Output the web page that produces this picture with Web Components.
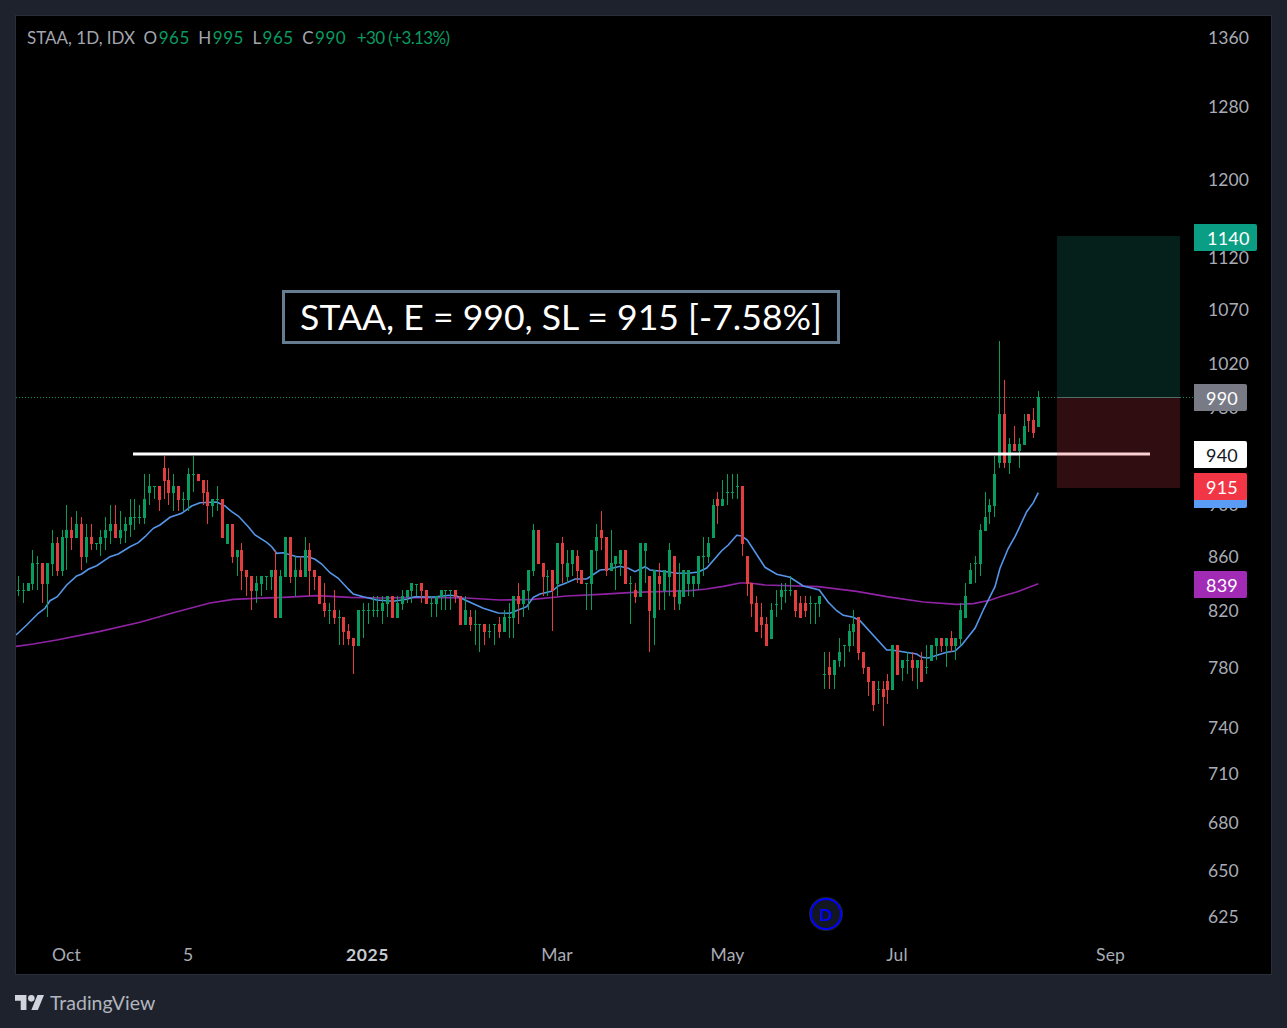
<!DOCTYPE html>
<html>
<head>
<meta charset="utf-8">
<title>STAA chart</title>
<style>
  html, body { margin: 0; background: #1e222d; }
</style>
</head>
<body>
<tv-page>
  <tv-chart-frame>
    <tv-candles></tv-candles>
    <tv-legend></tv-legend>
    <tv-chart-note>STAA, E = 990, SL = 915 [-7.58%]</tv-chart-note>
    <tv-price-axis ticks="1360:38,1280:107,1200:180,1120:258,1070:310,1020:364,980:408,900:505,860:557,820:611,780:668,740:728,710:774,680:823,650:871,625:917"></tv-price-axis>
    <tv-price-badge top="481" bottom="508" bg="#5b9cf6"></tv-price-badge>
    <tv-price-badge top="224" bottom="251" bg="#0a9f84" wide>1140</tv-price-badge>
    <tv-price-badge top="384" bottom="411" bg="#787b86">990</tv-price-badge>
    <tv-price-badge top="441" bottom="468" bg="#ffffff" fg="#131722">940</tv-price-badge>
    <tv-price-badge top="473" bottom="500" bg="#f23645">915</tv-price-badge>
    <tv-price-badge top="571" bottom="598" bg="#a22bb6">839</tv-price-badge>
    <tv-event-marker>D</tv-event-marker>
    <tv-time-axis ticks="Oct:66.5,5:188,2025:367.5:b,Mar:557,May:727.5,Jul:897,Sep:1110.5"></tv-time-axis>
  </tv-chart-frame>
  <tv-brand>TradingView</tv-brand>
</tv-page>

<script>
const FONT = `Lato, "Open Sans", sans-serif`;

// candle data read off the chart: colour, body top, body bottom, wick top, wick bottom
const ZONE_A = { off: 440, rows: `g 450 450 408 468|g 450 450 429 488|g 429 453 429 453|g 369 432 330 450|g 369 369 348 450|r 369 432 369 489|g 369 432 369 530|g 309 372 270 408|r 309 393 291 408|g 291 393 270 408|g 270 294 195 390|r 270 294 231 330|g 252 294 213 294|r 252 351 231 390|g 291 351 252 369|r 291 312 252 330|g 310 310 310 330|g 291 312 270 348|g 270 294 231 330|g 252 273 195 312|r 252 294 195 294|g 270 294 213 312|g 252 273 231 309|g 231 255 177 291|g 231 231 177 270|g 231 231 195 252|g 177 234 102 252|g 138 159 102 195|g 138 138 138 177|r 138 180 138 213|r 84 123 48 177|r 120 159 84 195|g 138 159 102 213|r 138 180 138 213|g 178 178 156 213|g 102 180 84 213|g 103 103 48 156|r 102 123 102 123|r 120 159 120 195|r 156 198 120 252|g 177 198 177 231|g 178 178 138 213|r 177 294 177 294|g 252 312 252 312|r 252 351 252 369|g 330 351 330 408|r 330 393 309 450|r 390 411 390 468|r 408 453 408 510|g 429 453 408 489|g 408 432 408 468|g 408 408 408 450|g 390 411 390 450|r 390 534 330 534|g 408 534 390 534|g 291 411 291 411|r 291 411 291 429|g 390 411 348 468|r 390 411 348 411|g 330 411 291 411|r 330 393 309 468|r 390 411 390 450|r 408 492 408 492|r 489 513 429 531|g 511 511 489 552|r 510 534 450 552|g 531 531 510 615|r 531 576 531 615|r 573 597 552 615` };
const ZONE_B = { off: 460, rows: `r 534 558 534 642|g 450 558 450 558|g 451 451 429 534|g 451 451 429 492|g 451 451 408 471|g 451 451 408 471|g 429 453 408 492|g 408 432 408 471|r 408 474 408 474|g 429 474 408 474|g 408 432 390 450|g 390 411 390 429|g 369 393 369 429|g 371 371 371 408|r 369 393 369 429|r 390 432 390 432|g 430 430 408 471|g 408 432 408 471|g 390 411 390 450|g 391 391 391 450|g 391 391 391 450|r 390 411 390 429|r 408 495 408 495|g 450 495 408 495|r 471 495 450 513|g 493 493 450 555|g 493 493 493 576|r 492 516 492 555|g 514 514 492 534|g 493 493 493 555|r 492 516 471 534|g 471 516 450 516|g 472 472 429 534|g 408 474 408 534|r 408 432 369 492|g 390 432 390 471|g 330 393 330 450|g 210 333 192 348|r 210 312 210 312|r 309 351 309 408|g 349 349 330 408|r 330 393 330 513|g 249 372 249 408|r 249 312 231 369|g 309 351 270 369|g 270 312 270 348|r 288 333 270 369|r 330 372 330 372|g 370 370 370 450|g 270 372 270 450|g 231 273 192 330|r 210 234 153 270|r 231 333 231 348|g 309 333 210 333|g 288 312 288 390|g 270 312 270 348|r 270 372 270 372|g 370 370 348 492|r 390 411 369 429|g 249 411 249 411|g 249 273 249 369|r 348 453 348 576|g 330 474 330 555|r 348 372 309 450|g 330 393 330 450|g 270 351 249 408|r 288 411 288 450|g 390 432 309 450|g 330 411 330 411|g 330 372 330 408|g 348 372 348 411|g 288 372 288 390` };
const ZONE_C = { off: 460, rows: `g 289 289 231 348|g 249 291 231 309|g 135 234 117 234|r 117 138 96 192|g 117 138 60 138|g 97 97 42 135|g 97 97 42 117|g 78 78 42 117|r 78 252 78 288|r 288 372 288 408|r 369 432 369 471|r 429 516 408 516|r 471 495 429 534|r 492 558 471 558|g 450 537 429 537|g 431 431 390 471|g 390 411 369 450|g 391 391 369 429|g 391 391 348 408|r 390 453 390 471|r 429 474 408 474|r 429 453 408 471|g 430 430 408 492|g 430 430 430 492|g 408 432 408 471|g 643 643 576 687|r 621 645 576 687|g 600 645 600 687|g 576 603 534 621|g 556 556 556 621|g 513 558 492 576|g 492 516 450 558|r 471 579 471 600|r 576 624 576 642|r 621 666 621 708|r 663 735 663 753|g 688 688 663 732|r 687 711 663 798|r 663 690 642 732|g 555 690 555 690|r 555 645 555 645|g 600 624 600 663|g 601 601 576 642|r 600 624 576 663|g 600 624 600 687|r 600 666 576 666|g 622 622 555 642|g 555 603 555 603|g 534 558 534 600|r 534 558 534 576|g 534 558 534 621|r 534 558 513 576|g 534 558 534 600|g 450 537 429 558|g 408 474 369 474|g 330 372 309 372|g 310 310 288 369|g 210 312 192 348|g 171 213 96 213|g 135 156 117 192` };
const ZONE_D = { off: 330, rows: `g 432 528 378 561|g 252 399 33 414|r 252 399 150 414|g 342 399 324 432|r 342 363 288 363|g 342 363 324 414|g 288 345 252 345|r 252 273 252 306|r 270 309 234 324|g 201 291 183 291` };

const BLUE_LINE = [
  [0, 440, [[48,585],[80,555],[115,520],[135,505],[150,482],[172,470],[200,435],[230,408],[245,402],[265,388],[290,377],[330,350],[355,342],[390,320],[415,308],[435,290],[460,265],[480,255],[510,232],[545,220],[575,198],[600,188],[650,186],[675,198],[695,215],[715,228],[745,260],[765,285],[800,307],[815,320],[830,340],[850,338],[890,350],[925,350],[945,358],[965,372],[990,398],[1015,415],[1050,453]]],
  [350, 460, [[0,392],[10,402],[40,410],[80,420],[130,424],[170,418],[195,410],[250,411],[300,406],[320,408],[345,420],[400,445],[445,459],[480,460],[530,440],[550,412],[570,402],[607,393],[625,378],[650,368],[675,357],[710,357],[750,330],[775,328],[810,319],[835,325],[855,335],[885,320],[900,330],[950,335],[980,340]]],
  [690, 460, [[0,339],[25,336],[50,324],[95,272],[115,255],[140,226],[155,228],[172,240],[225,322],[260,343],[300,352],[340,378],[388,390],[415,427],[440,452],[460,466],[490,472],[510,482],[590,570],[605,570],[680,582],[695,592],[715,594],[770,577],[795,573],[815,555],[855,505],[880,450],[915,380],[930,325],[955,265],[975,230],[1010,155],[1030,128],[1045,98]]],
];
const PURPLE_LINE = [
  [0, 440, [[48,619],[100,612],[170,600],[300,574],[420,547],[520,518],[630,489],[700,478],[850,472],[950,467],[1050,472]]],
  [350, 460, [[0,412],[100,414],[200,412],[350,414],[450,420],[550,418],[650,408],[750,403],[850,397],[950,394]]],
  [690, 460, [[0,392],[50,387],[100,379],[150,369],[180,369],[225,375],[385,380],[500,394],[590,410],[700,426],[800,433],[850,431],[900,421],[930,410],[980,396],[1045,371]]],
];

const toPoints = (zones) =>
  zones
    .flatMap(([ox, oy, pts]) => pts.map(([x, y]) => `${(ox + x / 3).toFixed(1)},${(oy + y / 3).toFixed(1)}`))
    .join(" ");

class TvPage extends HTMLElement {
  constructor() {
    super();
    this.attachShadow({ mode: "open" });
    this.shadowRoot.innerHTML = `
      <style>
        :host { display: flex; flex-direction: column; box-sizing: border-box; width: 1287px; height: 1028px; padding: 15px 15px 0; background: #1e222d; font-family: ${FONT}; }
      </style>
      <slot></slot>`;
  }
}

class TvChartFrame extends HTMLElement {
  constructor() {
    super();
    this.attachShadow({ mode: "open" });
    this.shadowRoot.innerHTML = `
      <style>
        :host { display: block; position: relative; box-sizing: border-box; width: 1257px; height: 960px; background: #000; border: 1px solid #2a2e39; overflow: hidden; }
      </style>
      <slot></slot>`;
  }
}

// candles, averages, zones and drawn lines; the svg uses page coordinates
class TvCandles extends HTMLElement {
  constructor() {
    super();
    this.attachShadow({ mode: "open" });
  }

  connectedCallback() {
    this.render();
  }

  candlePaths() {
    const paths = { g: "", r: "" };
    let i = 0;
    [ZONE_A, ZONE_B, ZONE_C, ZONE_D].forEach(({ off, rows }) => {
      rows.split("|").forEach((row) => {
        const [c, t, b, wt, wb] = row.split(" ");
        const x = Math.floor(18.4 + i * 4.858);
        const top = Math.round(off + t / 3);
        const bottom = Math.max(Math.round(off + b / 3), top + 1);
        const wTop = Math.round(off + wt / 3);
        const wBottom = Math.round(off + wb / 3);
        paths[c] += `M${x} ${wTop}h1V${wBottom}h-1z`;
        paths[c] += `M${x - 1} ${top}h3V${bottom}h-3z`;
        i++;
      });
    });
    return paths;
  }

  render() {
    const { g, r } = this.candlePaths();
    this.shadowRoot.innerHTML = `
      <style>
        :host { display: block; position: absolute; inset: 0; }
        svg { display: block; }
      </style>
      <svg width="1255" height="958" viewBox="16 16 1255 958">
        <line x1="16" y1="397.5" x2="1193" y2="397.5" stroke="#0b8a68" stroke-width="1" stroke-dasharray="1 2"/>
        <polyline points="${toPoints(PURPLE_LINE)}" fill="none" stroke="#8f23a3" stroke-width="1.7"/>
        <polyline points="${toPoints(BLUE_LINE)}" fill="none" stroke="#5596ea" stroke-width="1.6"/>
        <g shape-rendering="crispEdges">
          <path d="${g}" fill="#089c5f"/>
          <path d="${r}" fill="#e23e40"/>
          <rect x="133" y="452" width="1018" height="4" fill="#fff" opacity=".5"/>
          <rect x="133" y="453" width="1018" height="2" fill="#fff"/>
          <rect x="1057" y="236" width="123" height="162" fill="#051f1a"/>
          <rect x="1057" y="398" width="123" height="90" fill="#2f0d11"/>
          <rect x="1057" y="452" width="93" height="4" fill="#fbd0d2" opacity=".5"/>
          <rect x="1057" y="453" width="93" height="2" fill="#fbd0d2"/>
          <rect x="1057" y="397" width="123" height="1" fill="#4f6b66"/>
        </g>
      </svg>`;
  }
}

class TvLegend extends HTMLElement {
  constructor() {
    super();
    this.attachShadow({ mode: "open" });
    const ohlc = [["O", "965"], ["H", "995"], ["L", "965"], ["C", "990"]];
    this.shadowRoot.innerHTML = `
      <style>
        :host { position: absolute; left: 11px; top: 12px; display: flex; align-items: center; gap: 8.5px; font-size: 17px; line-height: 20px; color: #a3a6af; white-space: nowrap; }
        span b { margin-left: 1.5px; letter-spacing: .5px; }
        b { font-weight: 400; color: #089c62; }
        .change { margin-left: 2px; letter-spacing: -.6px; }
      </style>
      <span>STAA, 1D, IDX</span>
      ${ohlc.map(([k, v]) => `<span>${k}<b>${v}</b></span>`).join("")}
      <b class="change">+30 (+3.13%)</b>`;
  }
}

class TvChartNote extends HTMLElement {
  constructor() {
    super();
    this.attachShadow({ mode: "open" });
    this.shadowRoot.innerHTML = `
      <style>
        :host { position: absolute; left: 266px; top: 274px; display: block; box-sizing: border-box; width: 558px; height: 54px; border: 3px solid #667c90; color: #fff; font-size: 35.6px; line-height: 47px; text-align: center; white-space: nowrap; }
      </style>
      <slot></slot>`;
  }
}

class TvPriceAxis extends HTMLElement {
  constructor() {
    super();
    this.attachShadow({ mode: "open" });
  }

  connectedCallback() {
    const ticks = this.getAttribute("ticks").split(",").map((t) => t.split(":"));
    this.shadowRoot.innerHTML = `
      <style>
        :host { position: absolute; left: 1178px; top: 0; bottom: 0; right: 0; display: block; font-size: 17.5px; letter-spacing: .1px; color: #a9acb5; }
        span { position: absolute; left: 14px; transform: translateY(-50%); line-height: 20px; }
      </style>
      ${ticks.map(([label, y]) => `<span style="top:${y - 16}px">${label}</span>`).join("")}`;
  }
}

class TvPriceBadge extends HTMLElement {
  constructor() {
    super();
    this.attachShadow({ mode: "open" });
  }

  connectedCallback() {
    const top = +this.getAttribute("top");
    const bottom = +this.getAttribute("bottom");
    const wide = this.hasAttribute("wide");
    this.shadowRoot.innerHTML = `
      <style>
        :host { position: absolute; left: 1178px; top: ${top - 16}px; width: ${wide ? 63 : 53}px; height: ${bottom - top}px; display: flex; align-items: center; box-sizing: border-box; padding-left: ${wide ? 13 : 12}px; border-radius: 0 2px 2px 0; background: ${this.getAttribute("bg")}; color: ${this.getAttribute("fg") || "#fff"}; font-size: 18px; letter-spacing: .2px; }
      </style>
      <slot></slot>`;
  }
}

class TvEventMarker extends HTMLElement {
  constructor() {
    super();
    this.attachShadow({ mode: "open" });
    this.shadowRoot.innerHTML = `
      <style>
        :host { position: absolute; left: 794px; top: 882px; width: 32px; height: 32px; box-sizing: border-box; display: flex; align-items: center; justify-content: center; border-radius: 50%; background: #131722; border: 2px solid #0000ff; box-shadow: 0 0 0 1px #1e222d; color: #0000ff; font-size: 17px; font-weight: 700; }
      </style>
      <slot></slot>`;
  }
}

class TvTimeAxis extends HTMLElement {
  constructor() {
    super();
    this.attachShadow({ mode: "open" });
  }

  connectedCallback() {
    const ticks = this.getAttribute("ticks").split(",").map((t) => t.split(":"));
    this.shadowRoot.innerHTML = `
      <style>
        :host { position: absolute; left: 0; top: 929px; right: 0; height: 20px; display: block; font-size: 17.5px; letter-spacing: .1px; color: #a9acb5; }
        span { position: absolute; top: 0; transform: translateX(-50%); line-height: 20px; }
        .year { font-weight: 700; color: #c8cad0; letter-spacing: .6px; }
      </style>
      ${ticks.map(([label, x, kind]) => `<span class="${kind ? "year" : ""}" style="left:${x - 16}px">${label}</span>`).join("")}`;
  }
}

class TvBrand extends HTMLElement {
  constructor() {
    super();
    this.attachShadow({ mode: "open" });
    this.shadowRoot.innerHTML = `
      <style>
        :host { display: flex; align-items: center; gap: 6px; height: 24px; margin-top: 15px; color: #b2b5be; font-size: 19.5px; }
        svg { display: block; }
      </style>
      <svg width="29" height="15" viewBox="0 4 35.5 18" fill="#d1d4dc" preserveAspectRatio="none"><path d="M14 22H7V11H0V4h14v18zM28 22h-8l7.5-18h8L28 22z"/><circle cx="20" cy="8" r="4"/></svg>
      <slot></slot>`;
  }
}

customElements.define("tv-page", TvPage);
customElements.define("tv-chart-frame", TvChartFrame);
customElements.define("tv-candles", TvCandles);
customElements.define("tv-legend", TvLegend);
customElements.define("tv-chart-note", TvChartNote);
customElements.define("tv-price-axis", TvPriceAxis);
customElements.define("tv-price-badge", TvPriceBadge);
customElements.define("tv-event-marker", TvEventMarker);
customElements.define("tv-time-axis", TvTimeAxis);
customElements.define("tv-brand", TvBrand);
</script>
</body>
</html>
